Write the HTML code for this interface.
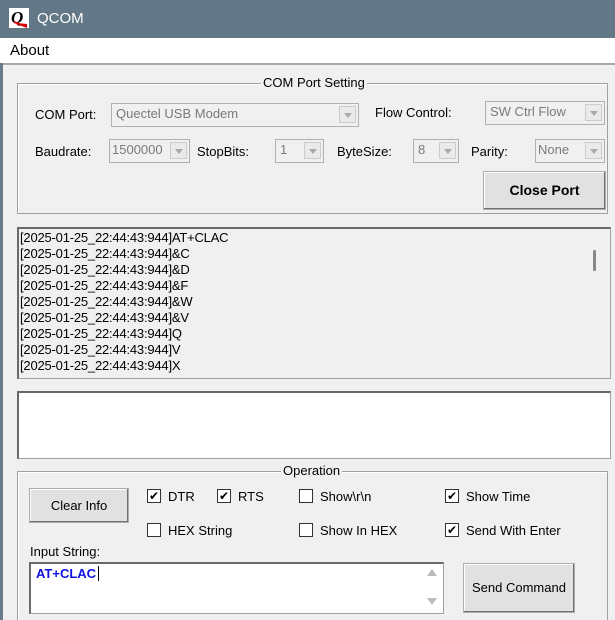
<!DOCTYPE html>
<html><head><meta charset="utf-8"><style>
*{box-sizing:border-box;margin:0;padding:0}
html,body{width:615px;height:620px;overflow:hidden}
body{background:#f0f0f0;font-family:"Liberation Sans",sans-serif;font-size:13px;color:#000;position:relative}
.a{position:absolute;white-space:nowrap}
.grp{position:absolute;border:1px solid #a0a0a0;box-shadow:inset 1px 1px 0 #fff}
.gt{position:absolute;background:#f0f0f0;padding:0 2px;top:-8px;line-height:14px}
.cb{position:absolute;border:1px solid #b0b0b0;background:#f0f0f0;color:#7a7a7a;line-height:20px;padding-left:4px}
.cb i{position:absolute;right:2px;top:2px;width:17px;height:17px;border:1px solid #ccc;background:#eaeaea}
.cb i:after{content:"";position:absolute;left:4px;top:6px;border:4px solid transparent;border-top:5px solid #aaa}
.btn{position:absolute;background:#e1e1e1;border:1px solid #adadad;box-shadow:inset -1px -1px 0 #707070,inset 1px 1px 0 #fff;text-align:center}
.ck{position:absolute;width:14px;height:14px;border:1px solid #333;background:#fff;font-size:12px;line-height:12px;text-align:center}
.sunk{position:absolute;border:1px solid #a0a0a0;border-top:2px solid #696969;border-left:2px solid #696969}
.log{letter-spacing:-0.2px}
</style></head><body>
<div class="a" style="left:0;top:0;width:615px;height:38px;background:#627887"></div>
<svg class="a" style="left:9px;top:8px" width="20" height="20"><rect width="20" height="20" fill="#fff"/><text x="2" y="15" font-family="Liberation Serif" font-weight="bold" font-style="italic" font-size="17" fill="#000">Q</text><path d="M5 14 L18 19 M8 16 L18 17" stroke="#d00" stroke-width="2"/></svg>
<div class="a" style="left:37px;top:10px;color:#fff;font-size:15px">QCOM</div>
<div class="a" style="left:0;top:38px;width:615px;height:25px;background:#fff"></div>
<div class="a" style="left:10px;top:42px;font-size:15px">About</div>
<div class="a" style="left:0;top:63px;width:3px;height:557px;background:#6a7a86"></div>
<div class="a" style="left:3px;top:63px;width:612px;height:2px;background:#a8a8a8"></div>

<div class="grp" style="left:17px;top:83px;width:591px;height:131px"><div class="gt" style="left:243px">COM Port Setting</div></div>
<div class="a" style="left:35px;top:107px">COM Port:</div>
<div class="cb" style="left:111px;top:103px;width:248px;height:24px">Quectel USB Modem<i></i></div>
<div class="a" style="left:375px;top:105px">Flow Control:</div>
<div class="cb" style="left:485px;top:101px;width:120px;height:24px">SW Ctrl Flow<i></i></div>
<div class="a" style="left:35px;top:144px">Baudrate:</div>
<div class="cb" style="left:109px;top:139px;width:81px;height:24px;padding-left:2px">1500000<i></i></div>
<div class="a" style="left:197px;top:144px">StopBits:</div>
<div class="cb" style="left:275px;top:139px;width:49px;height:24px">1<i></i></div>
<div class="a" style="left:337px;top:144px">ByteSize:</div>
<div class="cb" style="left:413px;top:139px;width:46px;height:24px">8<i></i></div>
<div class="a" style="left:471px;top:144px">Parity:</div>
<div class="cb" style="left:535px;top:139px;width:70px;height:24px;padding-left:2px">None<i></i></div>
<div class="btn" style="left:483px;top:171px;width:123px;height:39px;line-height:37px;font-weight:bold;font-size:14px">Close Port</div>

<div class="sunk" style="left:17px;top:227px;width:594px;height:152px;background:#f0f0f0"></div>
<div class="a log" style="left:20px;top:230px;line-height:16px">[2025-01-25_22:44:43:944]AT+CLAC<br>[2025-01-25_22:44:43:944]&amp;C<br>[2025-01-25_22:44:43:944]&amp;D<br>[2025-01-25_22:44:43:944]&amp;F<br>[2025-01-25_22:44:43:944]&amp;W<br>[2025-01-25_22:44:43:944]&amp;V<br>[2025-01-25_22:44:43:944]Q<br>[2025-01-25_22:44:43:944]V<br>[2025-01-25_22:44:43:944]X</div>
<div class="a" style="left:593px;top:250px;width:3px;height:21px;background:#888;border-radius:1px"></div>
<div class="sunk" style="left:17px;top:391px;width:594px;height:68px;background:#fff"></div>

<div class="grp" style="left:17px;top:471px;width:591px;height:160px"><div class="gt" style="left:263px">Operation</div></div>
<div class="btn" style="left:29px;top:488px;width:100px;height:35px;line-height:33px">Clear Info</div>
<div class="ck" style="left:147px;top:489px">✔</div><div class="a" style="left:168px;top:489px">DTR</div>
<div class="ck" style="left:217px;top:489px">✔</div><div class="a" style="left:238px;top:489px">RTS</div>
<div class="ck" style="left:299px;top:489px"></div><div class="a" style="left:320px;top:489px">Show\r\n</div>
<div class="ck" style="left:445px;top:489px">✔</div><div class="a" style="left:466px;top:489px">Show Time</div>
<div class="ck" style="left:147px;top:523px"></div><div class="a" style="left:168px;top:523px">HEX String</div>
<div class="ck" style="left:299px;top:523px"></div><div class="a" style="left:320px;top:523px">Show In HEX</div>
<div class="ck" style="left:445px;top:523px">✔</div><div class="a" style="left:466px;top:523px">Send With Enter</div>
<div class="a" style="left:30px;top:544px">Input String:</div>
<div class="sunk" style="left:29px;top:562px;width:415px;height:52px;background:#fff"></div>
<div class="a" style="left:36px;top:566px;color:#1010e0;font-weight:bold;font-size:13px">AT+CLAC</div>
<div class="a" style="left:98px;top:566px;width:1px;height:15px;background:#000"></div>
<div class="a" style="left:427px;top:569px;border:5px solid transparent;border-bottom:7px solid #bbb;border-top:0"></div>
<div class="a" style="left:427px;top:598px;border:5px solid transparent;border-top:7px solid #bbb;border-bottom:0"></div>
<div class="btn" style="left:463px;top:563px;width:112px;height:50px;line-height:48px">Send Command</div>
</body></html>
